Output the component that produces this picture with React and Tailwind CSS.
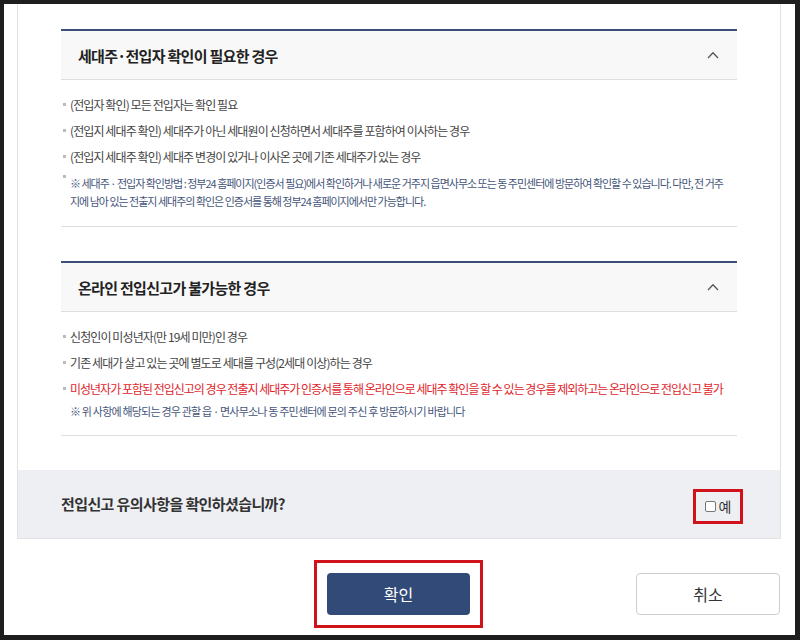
import React from "react";

const F = { fontFamily: '"Noto Sans CJK KR", "Noto Sans", sans-serif' };

function Chevron() {
  return (
    <svg width="12" height="8" viewBox="0 0 12 8" fill="none">
      <path d="M1 7 L6 1.8 L11 7" stroke="#555" strokeWidth="1.3" />
    </svg>
  );
}

function Item({ children, red }) {
  return (
    <li className={`relative pl-[9px] h-[26px] flex items-center ${red ? "text-[#e0242b] tracking-[-1px]" : "text-[#444]"}`}>
      <span className="absolute left-[2px] top-[11px] w-[3px] h-[3px] bg-[#bbb]" />
      <span className="whitespace-nowrap">{children}</span>
    </li>
  );
}

function Header({ title }) {
  return (
    <div className="border-t-2 border-[#3d4f75] border-b border-b-[#dedede] bg-[#f8f8f8] h-[51px] flex items-center justify-between pl-[17px] pr-[18px]">
      <span className="text-[15px] font-bold text-[#222] tracking-[-0.7px] mt-[2px]">{title}</span>
      <Chevron />
    </div>
  );
}

export default function App() {
  return (
    <div style={F} className="w-[800px] h-[640px] bg-[#1e1e1e] pt-[4px] pl-[4px] pr-[5px] pb-[5px]">
      <div className="bg-white w-full h-full flex flex-col">
        <div className="ml-[13px] w-[764px] border-x border-b border-[#e2e2e2] pt-[25px]">
          <div className="px-[43px] text-[12px] tracking-[-0.9px]">
            <Header title="세대주·전입자 확인이 필요한 경우" />
            <ul className="pt-[12px] pb-[0px] border-b border-[#dedede] h-[147px]">
              <Item>(전입자 확인) 모든 전입자는 확인 필요</Item>
              <Item>(전입지 세대주 확인) 세대주가 아닌 세대원이 신청하면서 세대주를 포함하여 이사하는 경우</Item>
              <Item>(전입지 세대주 확인) 세대주 변경이 있거나 이사온 곳에 기존 세대주가 있는 경우</Item>
              <li className="relative pl-[9px] pt-[4px] text-[11px] leading-[18px] text-[#45557a] tracking-[-1px]">
                <span className="absolute left-[2px] top-[5px] w-[3px] h-[3px] bg-[#bbb]" />
                <span className="whitespace-nowrap">※ 세대주 · 전입자 확인방법 : 정부24 홈페이지(인증서 필요)에서 확인하거나 새로운 거주지 읍면사무소 또는 동 주민센터에 방문하여 확인할 수 있습니다. 다만, 전 거주</span>
                <br />
                <span className="whitespace-nowrap">지에 남아 있는 전출지 세대주의 확인은 인증서를 통해 정부24 홈페이지에서만 가능합니다.</span>
              </li>
            </ul>
            <div className="h-[34px]" />
            <Header title="온라인 전입신고가 불가능한 경우" />
            <ul className="pt-[12px] border-b border-[#dedede] h-[124px]">
              <Item>신청인이 미성년자(만 19세 미만)인 경우</Item>
              <Item>기존 세대가 살고 있는 곳에 별도로 세대를 구성(2세대 이상)하는 경우</Item>
              <Item red>미성년자가 포함된 전입신고의 경우 전출지 세대주가 인증서를 통해 온라인으로 세대주 확인을 할 수 있는 경우를 제외하고는 온라인으로 전입신고 불가</Item>
              <li className="pl-[9px] text-[11px] text-[#45557a] tracking-[-0.8px] leading-[18px]">
                <span className="whitespace-nowrap">※ 위 사항에 해당되는 경우 관할 읍 · 면사무소나 동 주민센터에 문의 주신 후 방문하시기 바랍니다</span>
              </li>
            </ul>
          </div>
          <div className="mt-[34px] h-[68px] bg-[#eeeff3] flex items-center justify-between pl-[43px] pr-[37px]">
            <span className="text-[15px] font-bold text-[#333] tracking-[-0.6px]">전입신고 유의사항을 확인하셨습니까?</span>
            <div className="border-[3px] border-[#d0121b] h-[35px] w-[50px] flex items-center justify-center gap-[3px] mt-[4px]">
              <span className="w-[11px] h-[11px] border border-[#777] rounded-[2px] bg-white" />
              <span className="text-[14px] text-[#333]">예</span>
            </div>
          </div>
        </div>
        <div className="flex items-center mt-[21px] ml-[310px]">
          <div className="border-[3px] border-[#d0121b] w-[169px] h-[68px] flex items-center justify-center">
            <button className="w-[143px] h-[42px] bg-[#314a77] rounded-[4px] text-white text-[16px]">확인</button>
          </div>
          <button className="ml-[153px] w-[144px] h-[42px] bg-white border border-[#cfcfcf] rounded-[4px] text-[#333] text-[16px]">취소</button>
        </div>
      </div>
    </div>
  );
}
